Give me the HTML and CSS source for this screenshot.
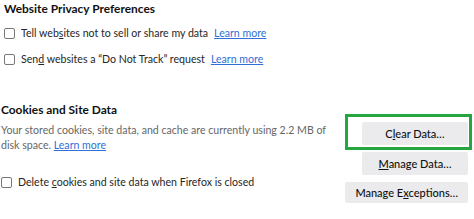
FILE: index.html
```html
<!DOCTYPE html>
<html lang="en">
<head>
    <meta charset="UTF-8">
    <title>Privacy Preferences</title>
    <link rel="stylesheet" href="styles.css">
</head>
<body>
<div class="privacy">
    <h2>Website Privacy Preferences</h2>
    <label class="check-row">
        <span class="box"></span>
        <span>Tell web<u>s</u>ites not to sell or share my data</span>
        <a href="#" class="learn">Learn more</a>
    </label>
    <label class="check-row">
        <span class="box"></span>
        <span>Sen<u>d</u> websites a “Do Not Track” request</span>
        <a href="#" class="learn">Learn more</a>
    </label>
</div>

<div class="cookies">
    <div class="cookies-left">
        <h2>Cookies and Site Data</h2>
        <p class="desc">Your stored cookies, site data, and cache are currently using 2.2 MB of disk space. <a href="#">Learn more</a></p>
        <label class="check-row">
            <span class="box"></span>
            <span>Delete <u>c</u>ookies and site data when Firefox is closed</span>
        </label>
    </div>
    <div class="cookies-buttons">
        <div class="highlight">
            <button>C<u>l</u>ear Data…</button>
        </div>
        <button><u>M</u>anage Data…</button>
        <button class="wide">Manage E<u>x</u>ceptions…</button>
    </div>
</div>
</body>
</html>
```

FILE: styles.css
```css
body {
    margin: 0;
    font-family: Lato, 'Open Sans', sans-serif;
    font-size: 10.6px;
    color: #262626;
    background: #fff;
}
h2 {
    margin: 0;
    font-size: 11.9px;
    font-weight: 700;
    color: #111;
}
u {
    text-decoration-thickness: 1px;
    text-underline-offset: 1px;
}
.privacy {
    padding: 0 0 0 4px;
}
.privacy h2 {
    line-height: 18px;
    margin-bottom: 2px;
}
.check-row {
    display: flex;
    align-items: center;
    height: 26px;
}
.box {
    width: 9px;
    height: 9px;
    border: 1px solid #777;
    border-radius: 2px;
    margin-right: 6px;
    flex-shrink: 0;
}
.learn, .desc a {
    color: #2f6fd6;
    text-decoration: underline;
    text-underline-offset: 1px;
}
.learn {
    margin-left: 6px;
}
.cookies {
    display: flex;
    justify-content: space-between;
    padding: 0 6px 0 1px;
    margin-top: 30px;
}
.cookies-left {
    width: 336px;
}
.cookies-left h2 {
    line-height: 18px;
    margin-top: -1px;
}
.desc {
    margin: 4px 0 16px;
    line-height: 15px;
    color: #666;
}
.cookies-buttons {
    display: flex;
    flex-direction: column;
    align-items: flex-end;
    gap: 7px;
    padding-top: 12px;
}
.highlight {
    border: 3px solid #26a640;
    padding: 5px 1px 2px 14px;
    margin-right: -4px;
    margin-bottom: -5px;
}
button {
    font-family: inherit;
    font-size: 11px;
    font-weight: 500;
    color: #111;
    background: #ebebee;
    border: none;
    border-radius: 2px;
    min-width: 106px;
    height: 23px;
    padding: 0 10px;
    white-space: nowrap;
}
button.wide {
    height: 21px;
}
```
